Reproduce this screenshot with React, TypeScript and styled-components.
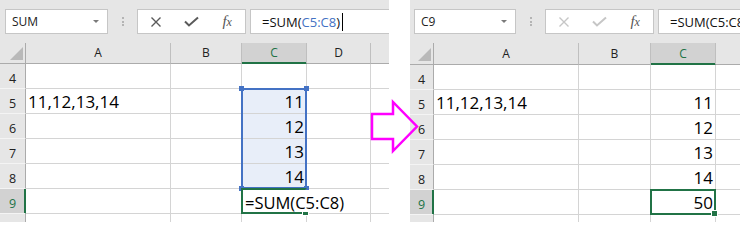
import React from "react";
import styled, { createGlobalStyle } from "styled-components";

const GlobalStyle = createGlobalStyle`
  html, body { margin: 0; padding: 0; background: #fff; }
  body { font-family: "Open Sans", "Liberation Sans", sans-serif; }
`;

const GREEN = "#217346";
const REF_BLUE = "#4472c4";

const Page = styled.div`
  position: relative;
  display: flex;
  width: 740px;
  height: 222px;
  overflow: hidden;
  background: #fff;
`;

const Panel = styled.div<{ $width: number }>`
  flex: none;
  width: ${(p) => p.$width}px;
  display: flex;
  flex-direction: column;
  overflow: hidden;
`;

const Gutter = styled.div`
  flex: none;
  width: 21px;
`;

/* ---------- formula bar ---------- */
const FormulaBar = styled.div<{ $pad: number }>`
  flex: none;
  height: 43px;
  box-sizing: border-box;
  padding: 9px 0 0 ${(p) => p.$pad}px;
  background: #e6e6e6;
  display: flex;
  align-items: flex-start;
`;

const NameBox = styled.div<{ $width: number }>`
  flex: none;
  width: ${(p) => p.$width}px;
  height: 25px;
  box-sizing: border-box;
  border: 1px solid #c6c6c6;
  background: #fff;
  display: flex;
  align-items: center;
  justify-content: space-between;
  padding: 0 8px 0 6px;
  font-size: 12px;
  color: #222;
`;

const DropArrow = styled.span`
  width: 0;
  height: 0;
  border-left: 3px solid transparent;
  border-right: 3px solid transparent;
  border-top: 3px solid #7a7a7a;
`;

const Grip = styled.div`
  flex: none;
  width: 29px;
  height: 25px;
  display: flex;
  flex-direction: column;
  align-items: center;
  justify-content: center;
  gap: 1.5px;
`;

const GripDot = styled.span`
  width: 2px;
  height: 2px;
  background: #b4b4b4;
`;

const FxBox = styled.div<{ $width: number }>`
  flex: none;
  width: ${(p) => p.$width}px;
  height: 25px;
  box-sizing: border-box;
  border: 1px solid #c6c6c6;
  background: #fff;
  display: grid;
  grid-template-columns: repeat(3, 1fr);
  align-items: center;
  justify-items: center;
`;

const FxGlyph = styled.span`
  font-family: "Liberation Serif", "DejaVu Serif", serif;
  font-style: italic;
  font-size: 15px;
  line-height: 1;
  color: #555;
`;

const FxSub = styled.span`
  font-size: 12px;
`;

const FormulaInput = styled.div`
  flex: 1;
  min-width: 0;
  margin-left: 4px;
  height: 25px;
  box-sizing: border-box;
  border: 1px solid #c6c6c6;
  border-right: none;
  background: #fff;
  display: flex;
  align-items: center;
  padding-left: 11px;
  font-size: 13px;
  color: #111;
  white-space: nowrap;
  overflow: hidden;
`;

const RefText = styled.span`
  color: ${REF_BLUE};
`;

const Caret = styled.span`
  display: inline-block;
  flex: none;
  width: 1px;
  height: 18px;
  background: #000;
  margin-left: 2px;
`;

/* ---------- sheet grid ---------- */
const Sheet = styled.div<{ $cols: string; $header: number }>`
  display: grid;
  grid-template-columns: ${(p) => p.$cols};
  grid-template-rows: ${(p) => p.$header}px;
  grid-auto-rows: 25px;
  width: max-content;
`;

const Corner = styled.div`
  grid-row: 1;
  grid-column: 1;
  background: #e6e6e6;
  border-right: 1px solid #ababab;
  border-bottom: 1px solid #ababab;
  display: flex;
  align-items: flex-end;
  justify-content: flex-end;
  padding: 0 2px 3px 0;
`;

const CornerTriangle = styled.span`
  width: 0;
  height: 0;
  border-left: 13px solid transparent;
  border-bottom: 13px solid #b9b9b9;
`;

const ColHead = styled.div<{ $col: number; $active: boolean }>`
  grid-row: 1;
  grid-column: ${(p) => p.$col};
  background: ${(p) => (p.$active ? "#d2d2d2" : "#e6e6e6")};
  border-right: 1px solid #bfbfbf;
  border-bottom: 1px solid ${(p) => (p.$active ? GREEN : "#ababab")};
  box-shadow: ${(p) => (p.$active ? `inset 0 -1px 0 ${GREEN}` : "none")};
  color: ${(p) => (p.$active ? GREEN : "#222")};
  font-size: 12px;
  line-height: 14px;
  display: flex;
  align-items: center;
  justify-content: center;
  white-space: nowrap;
`;

const RowHead = styled.div<{ $row: number; $active: boolean }>`
  grid-row: ${(p) => p.$row};
  grid-column: 1;
  background: ${(p) => (p.$active ? "#d2d2d2" : "#e6e6e6")};
  border-right: 1px solid ${(p) => (p.$active ? GREEN : "#ababab")};
  box-shadow: ${(p) => (p.$active ? `inset -1px 0 0 ${GREEN}` : "none")};
  border-bottom: 1px solid #f4f4f4;
  color: ${(p) => (p.$active ? GREEN : "#222")};
  font-size: 12.5px;
  line-height: 14px;
  display: flex;
  align-items: flex-end;
  justify-content: center;
  padding-bottom: 2px;
`;

const Cell = styled.div<{
  $row: number;
  $col: number;
  $align: "left" | "right";
  $selected: boolean;
}>`
  grid-row: ${(p) => p.$row};
  grid-column: ${(p) => p.$col};
  background: ${(p) => (p.$selected ? "#e8eef9" : "#fff")};
  border-right: 1px solid #d4d4d4;
  border-bottom: 1px solid #d4d4d4;
  display: flex;
  align-items: flex-end;
  justify-content: ${(p) => (p.$align === "right" ? "flex-end" : "flex-start")};
  padding: 0 2px 2px 2px;
  font-size: 17px;
  line-height: 18px;
  color: #000;
  white-space: nowrap;
  min-width: 0;
`;

const RangeBox = styled.div<{ $row: string; $col: string }>`
  grid-row: ${(p) => p.$row};
  grid-column: ${(p) => p.$col};
  margin: -1px 0 0 -1px;
  border: 2px solid ${REF_BLUE};
  position: relative;
  z-index: 2;
  pointer-events: none;
`;

const RangeHandle = styled.span<{ $v: "top" | "bottom"; $h: "left" | "right" }>`
  position: absolute;
  ${(p) => p.$v}: -4px;
  ${(p) => p.$h}: -4px;
  width: 5px;
  height: 5px;
  background: ${REF_BLUE};
`;

const ActiveCell = styled.div<{ $row: number; $col: number; $editing: boolean }>`
  grid-row: ${(p) => p.$row};
  grid-column: ${(p) => p.$col};
  margin: -1px 0 0 -1px;
  border: 2px solid ${GREEN};
  border-right-color: ${(p) => (p.$editing ? "transparent" : GREEN)};
  position: relative;
  z-index: 3;
  pointer-events: none;
`;

const FillHandle = styled.span`
  position: absolute;
  right: -4px;
  bottom: -4px;
  width: 5px;
  height: 5px;
  background: ${GREEN};
  border: 1px solid #fff;
`;

const EditBox = styled.div<{ $row: number; $col: string }>`
  grid-row: ${(p) => p.$row};
  grid-column: ${(p) => p.$col};
  justify-self: start;
  margin: 1px 0 2px 1px;
  background: #fff;
  z-index: 4;
  display: flex;
  align-items: flex-end;
  padding: 0 4px 0 2px;
  font-size: 16.5px;
  line-height: 18px;
  color: #000;
  white-space: nowrap;
`;

const ArrowMark = styled.svg`
  position: absolute;
  left: 368px;
  top: 98px;
  width: 52px;
  height: 56px;
  overflow: visible;
  z-index: 5;
`;

/* ---------- icons ---------- */
const CancelIcon = ({ color }: { color: string }) => (
  <svg width="12" height="12" viewBox="0 0 12 12">
    <path d="M1.5 1.5 L10.5 10.5 M10.5 1.5 L1.5 10.5" stroke={color} strokeWidth="1.4" fill="none" />
  </svg>
);

const EnterIcon = ({ color }: { color: string }) => (
  <svg width="15" height="11" viewBox="0 0 15 11">
    <polyline points="1,5.5 5,9.5 14,1.5" stroke={color} strokeWidth="2" fill="none" />
  </svg>
);

/* ---------- data ---------- */
type CellValue = { text: string; align: "left" | "right" };

type SheetSpec = {
  panelWidth: number;
  barPad: number;
  nameWidth: number;
  fxWidth: number;
  name: string;
  formula: React.ReactNode;
  iconColor: string;
  rowHeadWidth: number;
  headerHeight: number;
  cols: { label: string; width: number }[];
  rows: { num: number; label: string }[];
  activeCol: string;
  activeRow: number;
  values: Record<string, CellValue>;
  range?: { cols: string[]; rows: number[] };
  editText?: string;
};

/* row 10 is only a sliver at the bottom edge, so its number is not in view */
const ROWS = [4, 5, 6, 7, 8, 9, 10].map((n) => ({ num: n, label: n < 10 ? String(n) : "" }));
const gridRow = (r: number) => r - 2;

const common: Record<string, CellValue> = {
  A5: { text: "11,12,13,14", align: "left" },
  C5: { text: "11", align: "right" },
  C6: { text: "12", align: "right" },
  C7: { text: "13", align: "right" },
  C8: { text: "14", align: "right" },
};

const leftSpec: SheetSpec = {
  panelWidth: 389,
  barPad: 5,
  nameWidth: 103,
  fxWidth: 109,
  name: "SUM",
  formula: (
    <>
      =SUM(<RefText>C5:C8</RefText>)<Caret />
    </>
  ),
  iconColor: "#5a5a5a",
  rowHeadWidth: 26,
  headerHeight: 21,
  cols: [
    { label: "A", width: 145 },
    { label: "B", width: 71 },
    { label: "C", width: 65 },
    { label: "D", width: 64 },
    { label: "", width: 64 },
  ],
  rows: ROWS,
  activeCol: "C",
  activeRow: 9,
  values: common,
  range: { cols: ["C"], rows: [5, 6, 7, 8] },
  editText: "=SUM(C5:C8)",
};

const rightSpec: SheetSpec = {
  panelWidth: 330,
  barPad: 4,
  nameWidth: 102,
  fxWidth: 109,
  name: "C9",
  formula: <>=SUM(C5:C8)</>,
  iconColor: "#c6c6c6",
  rowHeadWidth: 24,
  headerHeight: 22,
  cols: [
    { label: "A", width: 145 },
    { label: "B", width: 72 },
    { label: "C", width: 65 },
    { label: "", width: 64 },
  ],
  rows: ROWS,
  activeCol: "C",
  activeRow: 9,
  values: { ...common, C9: { text: "50", align: "right" } },
};

function SheetPanel({ spec }: { spec: SheetSpec }) {
  const colTemplate = [spec.rowHeadWidth, ...spec.cols.map((c) => c.width)]
    .map((w) => `${w}px`)
    .join(" ");
  const colIdx = (i: number) => i + 2;
  const labelIdx = (label: string) => spec.cols.findIndex((c) => c.label === label) + 2;
  const inRange = (label: string, r: number) =>
    !!spec.range && spec.range.cols.includes(label) && spec.range.rows.includes(r);
  const activeColIdx = labelIdx(spec.activeCol);

  return (
    <Panel $width={spec.panelWidth}>
      <FormulaBar $pad={spec.barPad}>
        <NameBox $width={spec.nameWidth}>
          <span>{spec.name}</span>
          <DropArrow />
        </NameBox>
        <Grip>
          <GripDot />
          <GripDot />
          <GripDot />
        </Grip>
        <FxBox $width={spec.fxWidth}>
          <CancelIcon color={spec.iconColor} />
          <EnterIcon color={spec.iconColor} />
          <FxGlyph>
            f<FxSub>x</FxSub>
          </FxGlyph>
        </FxBox>
        <FormulaInput>{spec.formula}</FormulaInput>
      </FormulaBar>

      <Sheet $cols={colTemplate} $header={spec.headerHeight}>
        <Corner>
          <CornerTriangle />
        </Corner>
        {spec.cols.map((c, i) => (
          <ColHead key={i} $col={colIdx(i)} $active={c.label !== "" && c.label === spec.activeCol}>
            {c.label}
          </ColHead>
        ))}
        {spec.rows.map((r) => (
          <React.Fragment key={r.num}>
            <RowHead $row={gridRow(r.num)} $active={r.num === spec.activeRow}>
              {r.label}
            </RowHead>
            {spec.cols.map((c, i) => {
              const v = c.label ? spec.values[`${c.label}${r.num}`] : undefined;
              return (
                <Cell
                  key={i}
                  $row={gridRow(r.num)}
                  $col={colIdx(i)}
                  $align={v ? v.align : "left"}
                  $selected={c.label !== "" && inRange(c.label, r.num)}
                >
                  {v ? v.text : ""}
                </Cell>
              );
            })}
          </React.Fragment>
        ))}

        {spec.range && (
          <RangeBox
            $row={`${gridRow(spec.range.rows[0])} / span ${spec.range.rows.length}`}
            $col={`${labelIdx(spec.range.cols[0])} / span ${spec.range.cols.length}`}
          >
            <RangeHandle $v="top" $h="left" />
            <RangeHandle $v="top" $h="right" />
            <RangeHandle $v="bottom" $h="left" />
            <RangeHandle $v="bottom" $h="right" />
          </RangeBox>
        )}

        {spec.editText && (
          <EditBox $row={gridRow(spec.activeRow)} $col={`${activeColIdx} / span 2`}>
            {spec.editText}
          </EditBox>
        )}

        <ActiveCell $row={gridRow(spec.activeRow)} $col={activeColIdx} $editing={!!spec.editText}>
          <FillHandle />
        </ActiveCell>
      </Sheet>
    </Panel>
  );
}

export default function App() {
  return (
    <>
      <GlobalStyle />
      <Page>
        <SheetPanel spec={leftSpec} />
        <Gutter />
        <SheetPanel spec={rightSpec} />
        <ArrowMark viewBox="0 0 52 56">
          <polygon
            points="4,16 25,16 25,4 49,28.5 25,53 25,41 4,41"
            fill="none"
            stroke="#ff00ff"
            strokeWidth="2.5"
            strokeLinejoin="miter"
          />
        </ArrowMark>
      </Page>
    </>
  );
}
